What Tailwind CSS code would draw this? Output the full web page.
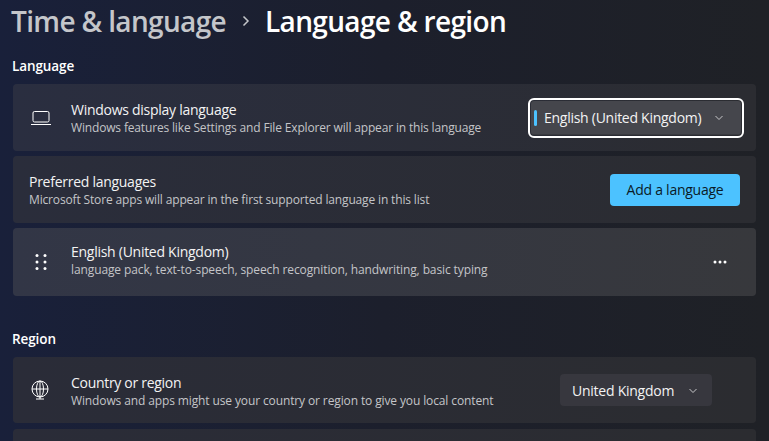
<!DOCTYPE html>
<html lang="en">
<head>
<meta charset="UTF-8">
<title>Language &amp; region</title>
<script src="https://cdn.jsdelivr.net/npm/@tailwindcss/browser@4"></script>
</head>
<body class="w-[769px] h-[441px] overflow-hidden bg-gradient-to-r from-[#19203a] via-[#1c1f2c] to-[#1f2126] font-['Open_Sans',sans-serif] text-white">
  <!-- Header -->
  <div class="h-[42px] flex items-center pl-[11px] text-[28px] font-semibold leading-none tracking-[-0.65px]">
    <span class="text-[#c4c6ca]">Time &amp; language</span>
    <svg class="w-[10px] h-[14px] ml-[15px] mr-[14px]" viewBox="0 0 10 14" fill="none" stroke="#c4c6ca" stroke-width="1.5"><path d="M2.5 2.5 7 7l-4.5 4.5"/></svg>
    <span>Language &amp; region</span>
  </div>

  <h2 class="mt-[15px] ml-[12px] h-[18px] text-[13.5px] font-semibold leading-[18px] tracking-[-0.1px]">Language</h2>

  <div class="mx-[13px] mt-[9px] flex flex-col gap-[5px]">
    <!-- Display language -->
    <div class="h-[67px] rounded-[4px] bg-gradient-to-r from-[#2a2e40] to-[#2b2c31] flex items-center">
      <svg class="w-[20px] h-[14px] ml-[18px] mr-[20px]" viewBox="0 0 20 14" fill="none" stroke="#fff"><rect x="2" y="0.5" width="16" height="10.5" rx="1.5"/><path d="M0 13.5h20"/></svg>
      <div class="flex-1 pt-[2px]">
        <div class="text-[14px] leading-[18px] text-[#f3f3f3] tracking-[-0.27px]">Windows display language</div>
        <div class="text-[12px] leading-[17px] text-[#c4c5c8] tracking-[-0.16px]">Windows features like Settings and File Explorer will appear in this language</div>
      </div>
      <div class="mr-[12px] w-[216px] h-[40px] rounded-[6px] border-2 border-white p-[1px]">
        <div class="h-full rounded-[3px] bg-[#45464c] border-b border-[#3a3b40] flex items-center pl-[3px] pt-[1px]">
          <span class="w-[3px] h-[16px] rounded-full bg-[#4cc2ff]"></span>
          <span class="ml-[7px] text-[14px] text-[#f3f3f3] tracking-[-0.27px]">English (United Kingdom)</span>
          <svg class="w-[10px] h-[6px] ml-[13px]" viewBox="0 0 10 6" fill="none" stroke="#c8c8ca"><path d="M1.5 1 5 4.5 8.5 1"/></svg>
        </div>
      </div>
    </div>

    <!-- Preferred languages -->
    <div class="h-[67px] rounded-[4px] bg-gradient-to-r from-[#2a2d3b] to-[#2b2c31] flex items-center pl-[16px]">
      <div class="flex-1 pt-[2px]">
        <div class="text-[14px] leading-[18px] text-[#f3f3f3] tracking-[-0.27px]">Preferred languages</div>
        <div class="text-[12px] leading-[17px] text-[#c4c5c8] tracking-[-0.15px]">Microsoft Store apps will appear in the first supported language in this list</div>
      </div>
      <button class="mr-[16px] w-[130px] h-[32px] rounded-[4px] bg-[#4cc2ff] text-[14px] text-[#0a1a26] tracking-[-0.25px]">Add a language</button>
    </div>

    <!-- Installed language -->
    <div class="h-[68px] rounded-[4px] bg-gradient-to-r from-[#323646] to-[#37383c] flex items-center">
      <svg class="w-[12px] h-[18px] ml-[22px] mr-[24px]" viewBox="0 0 12 18" fill="#fff"><circle cx="2" cy="2.5" r="1.5"/><circle cx="10" cy="2.5" r="1.5"/><circle cx="2" cy="9" r="1.5"/><circle cx="10" cy="9" r="1.5"/><circle cx="2" cy="15.5" r="1.5"/><circle cx="10" cy="15.5" r="1.5"/></svg>
      <div class="flex-1 pb-[3px]">
        <div class="text-[14px] leading-[18px] text-[#f3f3f3] tracking-[-0.27px]">English (United Kingdom)</div>
        <div class="text-[12px] leading-[17px] text-[#c4c5c8] tracking-[-0.11px]">language pack, text-to-speech, speech recognition, handwriting, basic typing</div>
      </div>
      <svg class="w-[14px] h-[4px] mr-[29px]" viewBox="0 0 14 4" fill="#fff"><circle cx="2" cy="2" r="1.5"/><circle cx="7" cy="2" r="1.5"/><circle cx="12" cy="2" r="1.5"/></svg>
    </div>
  </div>

  <h2 class="mt-[34px] ml-[12px] h-[18px] text-[13.5px] font-semibold leading-[18px] tracking-[-0.1px]">Region</h2>

  <div class="mx-[13px] mt-[9px] flex flex-col gap-[6px]">
    <!-- Country -->
    <div class="h-[66px] shrink-0 rounded-[4px] bg-gradient-to-r from-[#2a2c38] to-[#2b2c30] flex items-center">
      <svg class="w-[20px] h-[20px] ml-[17px] mr-[21px]" viewBox="0 0 20 20" fill="none" stroke="#fff"><circle cx="10" cy="9" r="8"/><ellipse cx="10" cy="9" rx="3.5" ry="8"/><path d="M2 9h16M10 1v18M6 19h8"/></svg>
      <div class="flex-1 pt-[2px]">
        <div class="text-[14px] leading-[18px] text-[#f3f3f3] tracking-[-0.3px]">Country or region</div>
        <div class="text-[12px] leading-[17px] text-[#c4c5c8] tracking-[-0.12px]">Windows and apps might use your country or region to give you local content</div>
      </div>
      <div class="mr-[44px] w-[152px] h-[32px] rounded-[4px] bg-[#37373e] flex items-center pl-[12px] pt-[1px]">
        <span class="text-[14px] text-[#f3f3f3] tracking-[-0.25px]">United Kingdom</span>
        <svg class="w-[10px] h-[6px] ml-[14px]" viewBox="0 0 10 6" fill="none" stroke="#c8c8ca"><path d="M1.5 1 5 4.5 8.5 1"/></svg>
      </div>
    </div>
    <div class="h-[12px] shrink-0 rounded-t-[4px] bg-gradient-to-r from-[#2a2c38] to-[#2b2c30]"></div>
  </div>
</body>
</html>
